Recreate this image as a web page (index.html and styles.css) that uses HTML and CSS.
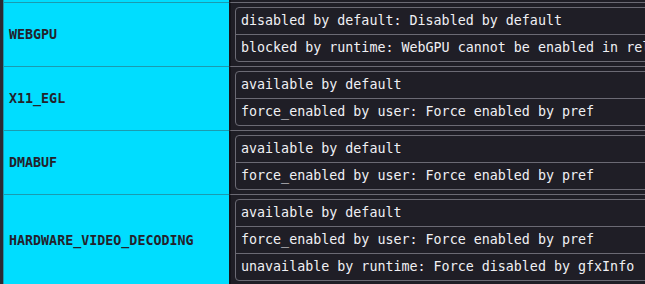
FILE: index.html
```html
<!DOCTYPE html>
<html>
<head>
<meta charset="utf-8">
<link rel="stylesheet" href="styles.css">
</head>
<body>
<div class="features">
  <div class="row stub"><div class="name"></div><div class="value"></div></div>
  <div class="row">
    <div class="name">WEBGPU</div>
    <div class="value">
      <ul class="log">
        <li>disabled by default: Disabled by default</li>
        <li>blocked by runtime: WebGPU cannot be enabled in release or beta</li>
      </ul>
    </div>
  </div>
  <div class="row">
    <div class="name">X11_EGL</div>
    <div class="value">
      <ul class="log">
        <li>available by default</li>
        <li>force_enabled by user: Force enabled by pref</li>
      </ul>
    </div>
  </div>
  <div class="row">
    <div class="name">DMABUF</div>
    <div class="value">
      <ul class="log">
        <li>available by default</li>
        <li>force_enabled by user: Force enabled by pref</li>
      </ul>
    </div>
  </div>
  <div class="row">
    <div class="name">HARDWARE_VIDEO_DECODING</div>
    <div class="value">
      <ul class="log">
        <li>available by default</li>
        <li>force_enabled by user: Force enabled by pref</li>
        <li>unavailable by runtime: Force disabled by gfxInfo</li>
      </ul>
    </div>
  </div>
</div>
</body>
</html>
```

FILE: styles.css
```css
html, body {
  margin: 0;
  background: #2b2a33;
  overflow: hidden;
  width: 645px;
  height: 284px;
}
body {
  font-family: "DejaVu Sans Mono", monospace;
  font-size: 13.33px;
  color: #f0f0f4;
}
.features {
  margin-left: 3px;
  display: flex;
  flex-direction: column;
  width: 900px;
}
.row {
  display: flex;
}
.name {
  flex: none;
  box-sizing: border-box;
  width: 226px;
  background: #00ddff;
  border-top: 1px solid #1a9bb0;
  border-left: 1px solid #1a9bb0;
  padding-left: 5px;
  display: flex;
  align-items: center;
  font-weight: bold;
  color: #23222b;
}
.value {
  flex: 1;
  background: #1f1e26;
  border-top: 1px solid #6b6a74;
  border-left: 2px solid #15141a;
  padding: 4px;
}
.stub .name, .stub .value {
  height: 2px;
  border-top: none;
  padding-top: 0;
  padding-bottom: 0;
}
.log {
  list-style: none;
  margin: 0;
  padding: 0;
  border: 1px solid #6b6a74;
  border-radius: 4px;
  background: #1f1e26;
  display: flex;
  flex-direction: column;
}
.log li {
  height: 26px;
  line-height: 26px;
  padding-left: 5px;
  white-space: nowrap;
}
.log li + li {
  border-top: 1px solid #6b6a74;
}
```
